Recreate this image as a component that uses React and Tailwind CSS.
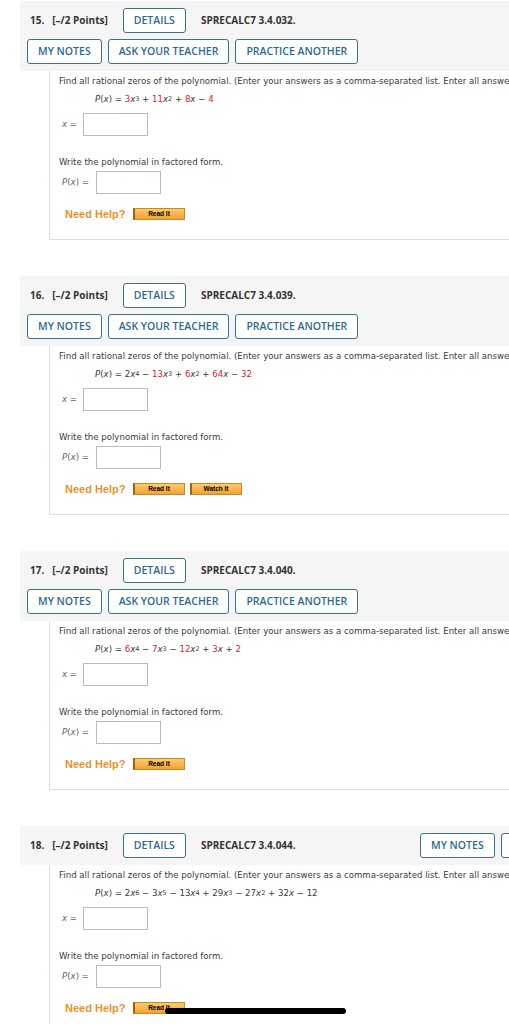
import React from 'react'

const btn =
  'shrink-0 h-[25px] px-[10px] border border-[#3b6f8e] rounded-[3px] bg-white text-[#2d6a8d] text-[10.5px] font-semibold leading-none flex items-center'

const R = ({ children }) => <span className="text-[#d3262b]">{children}</span>
const X = () => <i>x</i>
const Sup = ({ children }) => <sup className="text-[6.5px] relative -top-[1px]">{children}</sup>

const HelpBtn = ({ label }) => (
  <div className="w-[52px] h-[12px] border border-[#c88a26] border-l-[2px] border-l-[#9a6414] bg-linear-to-b from-[#fdca6a] to-[#f2a232] text-black text-[6.5px] font-bold font-[family-name:'Liberation_Sans',sans-serif] flex items-center justify-center leading-none">
    {label}
  </div>
)

const questions = [
  {
    num: 15,
    code: '3.4.032.',
    formula: (
      <>
        <R>3</R>
        <X />
        <Sup>3</Sup> + <R>11</R>
        <X />
        <Sup>2</Sup> + <R>8</R>
        <X /> − <R>4</R>
      </>
    )
  },
  {
    num: 16,
    code: '3.4.039.',
    watch: true,
    formula: (
      <>
        2<X />
        <Sup>4</Sup> − <R>13</R>
        <X />
        <Sup>3</Sup> + <R>6</R>
        <X />
        <Sup>2</Sup> + <R>64</R>
        <X /> − <R>32</R>
      </>
    )
  },
  {
    num: 17,
    code: '3.4.040.',
    formula: (
      <>
        <R>6</R>
        <X />
        <Sup>4</Sup> − <R>7</R>
        <X />
        <Sup>3</Sup> − <R>12</R>
        <X />
        <Sup>2</Sup> + <R>3</R>
        <X /> + <R>2</R>
      </>
    )
  },
  {
    num: 18,
    code: '3.4.044.',
    oneRow: true,
    formula: (
      <>
        2<X />
        <Sup>6</Sup> − 3<X />
        <Sup>5</Sup> − 13<X />
        <Sup>4</Sup> + 29<X />
        <Sup>3</Sup> − 27<X />
        <Sup>2</Sup> + 32<X /> − 12
      </>
    )
  }
]

const Buttons = () => (
  <div className="flex gap-[6px]">
    <div className={btn}>MY NOTES</div>
    <div className={btn}>ASK YOUR TEACHER</div>
    <div className={btn}>PRACTICE ANOTHER</div>
  </div>
)

const Question = ({ q }) => {
  const header = (
    <div className="flex items-center h-[25px] shrink-0">
      <span className="ml-[3px] text-[10px] font-bold text-[#333]">{q.num}.</span>
      <span className="ml-[8px] text-[10px] font-bold text-[#333]">[–/2 Points]</span>
      <div className={`${btn} ml-[15px]`}>DETAILS</div>
      <span className="ml-[15px] text-[10px] font-bold text-[#333]">SPRECALC7 {q.code}</span>
    </div>
  )

  return (
    <div className="mb-[36px]">
      <div className="ml-[20px] bg-[#f5f5f5] px-[7px] py-[7px] overflow-hidden font-[family-name:'Open_Sans',sans-serif]">
        {q.oneRow ? (
          <div className="flex">
            <div className="w-[393px] shrink-0">{header}</div>
            <Buttons />
          </div>
        ) : (
          <>
            {header}
            <div className="mt-[6px]">
              <Buttons />
            </div>
          </>
        )}
      </div>
      <div className="ml-[49px] border-l border-b border-[#dddddd] pl-[9px] pt-[4px] pb-[18px] overflow-hidden text-[8.6px] text-[#3a3a3a] font-[family-name:'DejaVu_Sans',sans-serif]">
        <div className="leading-[12px] whitespace-nowrap">
          Find all rational zeros of the polynomial. (Enter your answers as a comma-separated list. Enter all answers
          including repetitions.)
        </div>
        <div className="mt-[6px] ml-[36px] leading-[12px] whitespace-nowrap">
          <i>P</i>(<X />) = {q.formula}
        </div>
        <div className="mt-[8px] ml-[3px] flex items-center">
          <span className="w-[21px] text-[#666]">
            <X /> =
          </span>
          <div className="w-[65px] h-[23px] border border-[#bbbbbb] bg-white" />
        </div>
        <div className="mt-[20px] leading-[12px]">Write the polynomial in factored form.</div>
        <div className="mt-[3px] ml-[3px] flex items-center">
          <span className="w-[34px] text-[#666]">
            <i>P</i>(<X />) =
          </span>
          <div className="w-[65px] h-[23px] border border-[#bbbbbb] bg-white" />
        </div>
        <div className="mt-[13px] ml-[6px] h-[14px] flex items-center">
          <span className="text-[11px] font-bold text-[#e8912d] font-[family-name:'Liberation_Sans',sans-serif] leading-none">
            Need Help?
          </span>
          <div className="ml-[7px] flex gap-[5px]">
            <HelpBtn label="Read It" />
            {q.watch && <HelpBtn label="Watch It" />}
          </div>
        </div>
      </div>
    </div>
  )
}

export default function App() {
  return (
    <div className="relative w-full min-h-[1024px] overflow-hidden bg-white pt-[1px]">
      {questions.map((q) => (
        <Question key={q.num} q={q} />
      ))}
      <div className="absolute top-[1008px] left-[165px] w-[181px] h-[6px] rounded-full bg-black" />
    </div>
  )
}
